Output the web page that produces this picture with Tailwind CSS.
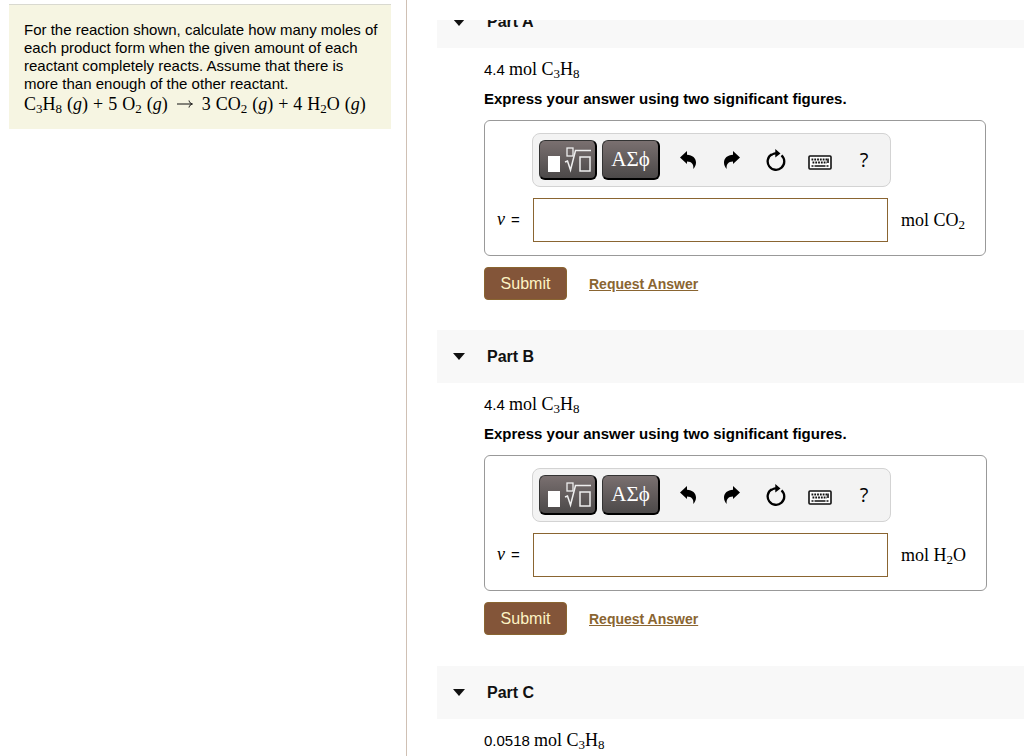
<!DOCTYPE html>
<html lang="en">
<head>
    <meta charset="UTF-8">
    <meta name="viewport" content="width=device-width, initial-scale=1.0">
    <title>Reaction Stoichiometry</title>
    <script src="https://cdn.jsdelivr.net/npm/@tailwindcss/browser@4"></script>
</head>
<body class="bg-white h-screen flex overflow-hidden font-['Liberation_Sans',Arial,sans-serif] text-[15px] text-black">

    <svg class="hidden">
        <symbol id="icon-template" viewBox="0 0 58 40">
            <rect x="9" y="16" width="12" height="16" fill="#fff"/>
            <g fill="none" stroke="#eee">
                <rect x="28" y="8" width="6" height="8" stroke-width="1.3"/>
                <path d="M26 22l2.500-1L31.500 30 36.500 10.500H52" stroke-width="1.500"/>
                <rect x="41" y="17" width="10" height="14" stroke-width="1.500"/>
            </g>
        </symbol>
        <symbol id="icon-undo" viewBox="0 0 16 18">
            <path d="M0 6.5L7 0v3.7c5.500.3 9 3.300 9 7.800 0 2.300-.8 4.500-2.800 6.500.8-4.500-1.200-7.300-6.200-7.500V13z"/>
        </symbol>
        <symbol id="icon-reset" viewBox="0 0 20 22">
            <path d="M5.800 5.300A8.300 8.300 0 1 0 15.500 6.300" fill="none" stroke="#000" stroke-width="2.300"/>
            <path d="M4.500 5.800C6 4.500 7.500 3.500 9.300 3.300V0l5.200 4.500L9.300 8.500V5.500C7.800 5.700 6.800 6.300 5.800 7z"/>
        </symbol>
        <symbol id="icon-keyboard" viewBox="0 0 24 15">
            <rect x="1" y="1" width="22" height="13" rx="1" fill="#fff" stroke="#111" stroke-width="1.600"/>
            <path d="M3.500 4.500H19M4.500 7.500H19" fill="none" stroke="#111" stroke-width="1.800" stroke-dasharray="1.800 1"/>
            <path d="M20 3.500v4.500M3.500 11h2M6.500 11h11M18.500 11h2" fill="none" stroke="#111" stroke-width="1.600"/>
        </symbol>
    </svg>

    <aside class="w-[407px] shrink-0 border-r border-[#cfc0b4] pl-[9px] pr-[15px] pt-1">
        <div class="border-t border-[#d9d9d0] bg-[#f6f5e2] pl-[15px] pr-3 pt-4 pb-[15px]">
            <p class="leading-[18px] mb-px">
                For the reaction shown, calculate how many moles of<br>
                each product form when the given amount of each<br>
                reactant completely reacts. Assume that there is<br>
                more than enough of the other reactant.
            </p>
            <p class="flex items-baseline gap-[5px] whitespace-nowrap font-['Liberation_Serif',serif] text-lg leading-5">
                <span>C<sub class="text-[13px] bottom-[-3px]">3</sub>H<sub class="text-[13px] bottom-[-3px]">8</sub></span>
                <span>(<i>g</i>)</span>
                <span>+</span>
                <span>5</span>
                <span>O<sub class="text-[13px] bottom-[-3px]">2</sub></span>
                <span>(<i>g</i>)</span>
                <svg class="w-4 h-2 mx-1 self-center" viewBox="0 0 16 8" fill="none" stroke="#111"><path d="M0 4h15M12 .5c.5 2 1.500 3 3.500 3.500-2 .5-3 1.500-3.500 3.500"/></svg>
                <span>3</span>
                <span>CO<sub class="text-[13px] bottom-[-3px]">2</sub></span>
                <span>(<i>g</i>)</span>
                <span>+</span>
                <span>4</span>
                <span>H<sub class="text-[13px] bottom-[-3px]">2</sub>O</span>
                <span>(<i>g</i>)</span>
            </p>
        </div>
    </aside>

    <main class="flex-1 min-w-0 mt-5 ml-[30px] overflow-hidden">
        <!-- The list is scrolled a little way into Part A -->
        <div class="-mt-6">

            <section class="pb-[30px]">
                <h2 class="flex items-center gap-[22px] h-[52px] pl-4 bg-[#f8f8f8] font-bold text-base text-[#111]">
                    <svg class="w-3 h-[7px]" viewBox="0 0 12 7"><path d="M0 0h12L6 7z" fill="#111"/></svg>
                    Part A
                </h2>
                <div class="pl-[47px] pt-[11px]">
                    <p class="h-5 leading-5">4.4 <span class="font-['Liberation_Serif',serif] text-lg leading-5">mol C<sub class="text-[13px] bottom-[-3px]">3</sub>H<sub class="text-[13px] bottom-[-3px]">8</sub></span></p>
                    <p class="font-bold leading-5 mt-[10px]">Express your answer using two significant figures.</p>
                    <div class="w-fit h-[136px] mt-[11px] border border-[#999] rounded-md pl-3 pr-5 pt-3">
                        <div class="w-[359px] h-[54px] ml-[35px] flex items-center pl-[6px] border border-[#d3d3d3] rounded-lg bg-[#f3f3f3]">
                            <button type="button" aria-label="Templates" class="w-[58px] h-10 mr-[5px] rounded-md border border-[#333] border-b-2 border-r-2 border-b-black border-r-black bg-linear-to-b from-[#7a7070] to-[#4c4949]"><svg class="w-[58px] h-10 -m-px"><use href="#icon-template"/></svg></button>
                            <button type="button" aria-label="Symbols" class="w-[58px] h-10 mr-[6px] rounded-md border border-[#333] border-b-2 border-r-2 border-b-black border-r-black bg-linear-to-b from-[#7a7070] to-[#4c4949] text-white text-[21px] leading-none font-['Liberation_Serif',serif]">ΑΣϕ</button>
                            <button type="button" aria-label="Undo" class="w-11 flex justify-center"><svg class="w-4 h-[18px]"><use href="#icon-undo"/></svg></button>
                            <button type="button" aria-label="Redo" class="w-11 flex justify-center"><svg class="w-4 h-[18px] -scale-x-100"><use href="#icon-undo"/></svg></button>
                            <button type="button" aria-label="Reset" class="w-11 flex justify-center"><svg class="w-5 h-[22px]"><use href="#icon-reset"/></svg></button>
                            <button type="button" aria-label="Keyboard shortcuts" class="w-11 flex justify-center pt-1"><svg class="w-6 h-[15px]"><use href="#icon-keyboard"/></svg></button>
                            <button type="button" aria-label="Help" class="w-11 text-xl leading-none font-['Open_Sans',sans-serif]">?</button>
                        </div>
                        <div class="flex items-center mt-[11px]">
                            <label for="answerA" class="w-9 flex items-baseline gap-[6px]"><i class="font-['Liberation_Serif',serif] text-lg leading-5">ν</i> =</label>
                            <input id="answerA" type="text" class="w-[355px] h-11 px-2 mr-[13px] border border-[#8a6531] bg-white outline-none">
                            <span class="h-5 font-['Liberation_Serif',serif] text-lg leading-5">mol CO<sub class="text-[13px] bottom-[-3px]">2</sub></span>
                        </div>
                    </div>
                    <div class="flex items-center gap-[22px] mt-[11px]">
                        <button type="submit" class="w-[83px] h-[33px] rounded-sm border border-[#8a6531] bg-[#835539] text-[#fdf3c4] text-base">Submit</button>
                        <a href="#" class="font-bold text-sm text-[#8a6531] underline">Request Answer</a>
                    </div>
                </div>
            </section>

            <section class="pb-[31px]">
                <h2 class="flex items-center gap-[22px] h-[53px] pl-4 bg-[#f8f8f8] font-bold text-base text-[#111]">
                    <svg class="w-3 h-[7px]" viewBox="0 0 12 7"><path d="M0 0h12L6 7z" fill="#111"/></svg>
                    Part B
                </h2>
                <div class="pl-[47px] pt-[11px]">
                    <p class="h-5 leading-5">4.4 <span class="font-['Liberation_Serif',serif] text-lg leading-5">mol C<sub class="text-[13px] bottom-[-3px]">3</sub>H<sub class="text-[13px] bottom-[-3px]">8</sub></span></p>
                    <p class="font-bold leading-5 mt-[10px]">Express your answer using two significant figures.</p>
                    <div class="w-fit h-[136px] mt-[11px] border border-[#999] rounded-md pl-3 pr-5 pt-3">
                        <div class="w-[359px] h-[54px] ml-[35px] flex items-center pl-[6px] border border-[#d3d3d3] rounded-lg bg-[#f3f3f3]">
                            <button type="button" aria-label="Templates" class="w-[58px] h-10 mr-[5px] rounded-md border border-[#333] border-b-2 border-r-2 border-b-black border-r-black bg-linear-to-b from-[#7a7070] to-[#4c4949]"><svg class="w-[58px] h-10 -m-px"><use href="#icon-template"/></svg></button>
                            <button type="button" aria-label="Symbols" class="w-[58px] h-10 mr-[6px] rounded-md border border-[#333] border-b-2 border-r-2 border-b-black border-r-black bg-linear-to-b from-[#7a7070] to-[#4c4949] text-white text-[21px] leading-none font-['Liberation_Serif',serif]">ΑΣϕ</button>
                            <button type="button" aria-label="Undo" class="w-11 flex justify-center"><svg class="w-4 h-[18px]"><use href="#icon-undo"/></svg></button>
                            <button type="button" aria-label="Redo" class="w-11 flex justify-center"><svg class="w-4 h-[18px] -scale-x-100"><use href="#icon-undo"/></svg></button>
                            <button type="button" aria-label="Reset" class="w-11 flex justify-center"><svg class="w-5 h-[22px]"><use href="#icon-reset"/></svg></button>
                            <button type="button" aria-label="Keyboard shortcuts" class="w-11 flex justify-center pt-1"><svg class="w-6 h-[15px]"><use href="#icon-keyboard"/></svg></button>
                            <button type="button" aria-label="Help" class="w-11 text-xl leading-none font-['Open_Sans',sans-serif]">?</button>
                        </div>
                        <div class="flex items-center mt-[11px]">
                            <label for="answerB" class="w-9 flex items-baseline gap-[6px]"><i class="font-['Liberation_Serif',serif] text-lg leading-5">ν</i> =</label>
                            <input id="answerB" type="text" class="w-[355px] h-11 px-2 mr-[13px] border border-[#8a6531] bg-white outline-none">
                            <span class="h-5 font-['Liberation_Serif',serif] text-lg leading-5">mol H<sub class="text-[13px] bottom-[-3px]">2</sub>O</span>
                        </div>
                    </div>
                    <div class="flex items-center gap-[22px] mt-[11px]">
                        <button type="submit" class="w-[83px] h-[33px] rounded-sm border border-[#8a6531] bg-[#835539] text-[#fdf3c4] text-base">Submit</button>
                        <a href="#" class="font-bold text-sm text-[#8a6531] underline">Request Answer</a>
                    </div>
                </div>
            </section>

            <section>
                <h2 class="flex items-center gap-[22px] h-[53px] pl-4 bg-[#f8f8f8] font-bold text-base text-[#111]">
                    <svg class="w-3 h-[7px]" viewBox="0 0 12 7"><path d="M0 0h12L6 7z" fill="#111"/></svg>
                    Part C
                </h2>
                <div class="pl-[47px] pt-[11px]">
                    <p class="h-5 leading-5">0.0518 <span class="font-['Liberation_Serif',serif] text-lg leading-5">mol C<sub class="text-[13px] bottom-[-3px]">3</sub>H<sub class="text-[13px] bottom-[-3px]">8</sub></span></p>
                </div>
            </section>

        </div>
    </main>

</body>
</html>
